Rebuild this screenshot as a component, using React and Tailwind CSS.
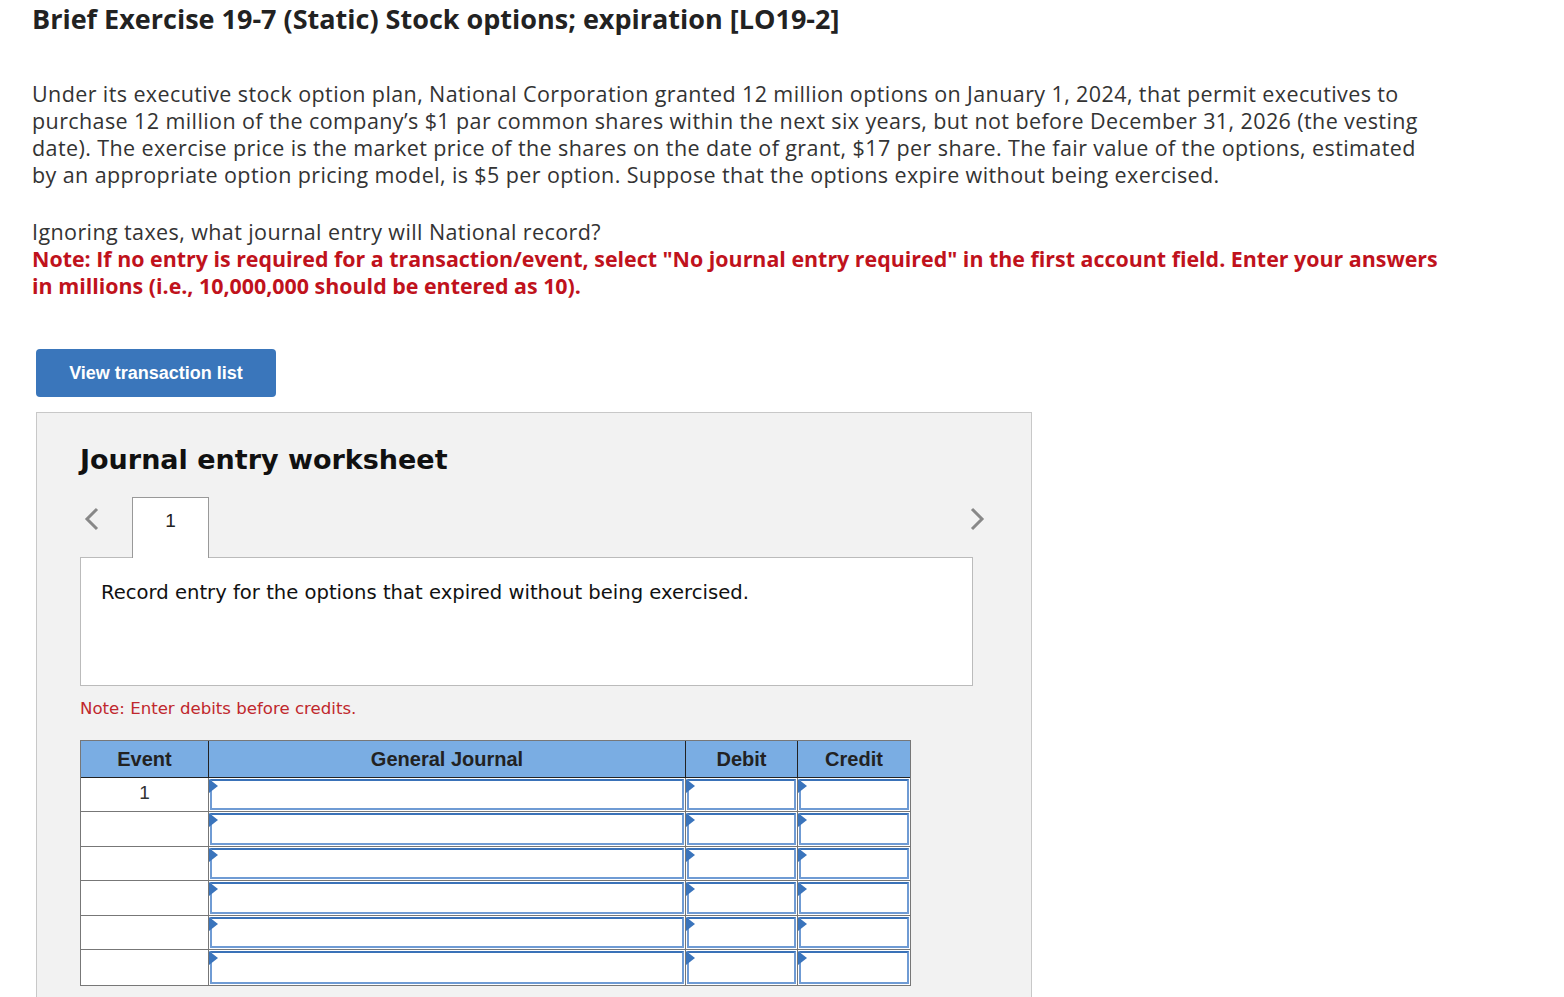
import { useState } from "react";

const rows = [1, 2, 3, 4, 5, 6];

function Flag() {
	return (
		<svg
			className="absolute left-[0px] top-[1px] h-[14px] w-[9px]"
			viewBox="0 0 9 14"
		>
			<path d="M0 0 L9 7 L0 14 Z" fill="#3a74bc" />
		</svg>
	);
}

function Field() {
	return (
		<div className="relative h-full w-full p-[1px]">
			<div className="h-full w-full border-2 border-[#6f9bd4] border-t-[#3a72b8] bg-white" />
			<Flag />
		</div>
	);
}

function JournalTable() {
	return (
		<div className="mt-[18px] w-[831px] border border-[#777] bg-white font-['Liberation_Sans',Arial,sans-serif]">
			<div className="flex h-[37px] border-b border-[#222] bg-[#7aade3] text-[20px] font-bold text-[#222]">
				<div className="flex w-[128px] items-center justify-center border-r border-[#222]">
					Event
				</div>
				<div className="flex w-[477px] items-center justify-center border-r border-[#222]">
					General Journal
				</div>
				<div className="flex w-[112px] items-center justify-center border-r border-[#222]">
					Debit
				</div>
				<div className="flex flex-1 items-center justify-center">Credit</div>
			</div>
			{rows.map((r, i) => (
				<div
					key={r}
					className={`flex h-[34.5px] ${i < rows.length - 1 ? "border-b border-[#777]" : ""}`}
				>
					<div className="flex w-[128px] items-center justify-center border-r border-[#777] pb-[3px] text-[19px] text-[#333]">
						{i === 0 ? "1" : ""}
					</div>
					<div className="w-[477px] border-r border-[#777]">
						<Field />
					</div>
					<div className="w-[112px] border-r border-[#777]">
						<Field />
					</div>
					<div className="flex-1">
						<Field />
					</div>
				</div>
			))}
		</div>
	);
}

function Chevron({ dir }) {
	return (
		<svg className="h-[26px] w-[16px]" viewBox="0 0 16 26" fill="none">
			<path
				d={dir === "left" ? "M13 3 L3 13 L13 23" : "M3 3 L13 13 L3 23"}
				stroke="#888"
				strokeWidth="3"
			/>
		</svg>
	);
}

export default function App() {
	const [tab] = useState(1);

	return (
		<div className="min-h-screen bg-white pl-[32px] pt-[2px] font-['Open_Sans','Lato',sans-serif] text-[#333]">
			<h1 className="text-[27px] font-bold leading-[34px] text-[#222]">
				Brief Exercise 19-7 (Static) Stock options; expiration [LO19-2]
			</h1>
			<p className="mt-[44px] text-[21.5px] leading-[27px] tracking-[0.4px]">
				Under its executive stock option plan, National Corporation granted 12
				million options on January 1, 2024, that permit executives to
				<br />
				purchase 12 million of the company’s $1 par common shares within the
				next six years, but not before December 31, 2026 (the vesting
				<br />
				date). The exercise price is the market price of the shares on the date
				of grant, $17 per share. The fair value of the options, estimated
				<br />
				by an appropriate option pricing model, is $5 per option. Suppose that
				the options expire without being exercised.
			</p>
			<p className="mt-[30px] text-[21.5px] leading-[27px] tracking-[0.4px]">
				Ignoring taxes, what journal entry will National record?
			</p>
			<p className="text-[21.4px] font-bold leading-[27px] text-[#c0121c]">
				Note: If no entry is required for a transaction/event, select "No
				journal entry required" in the first account field. Enter your answers
				<br />
				in millions (i.e., 10,000,000 should be entered as 10).
			</p>

			<button className="ml-[4px] mt-[50px] flex h-[48px] w-[240px] items-center justify-center rounded-[4px] bg-[#3a76bb] font-['Liberation_Sans',Arial,sans-serif] text-[18px] font-bold text-white">
				View transaction list
			</button>

			<div className="ml-[4px] mt-[15px] w-[996px] border border-[#c8c8c8] bg-[#f2f2f2] pb-[40px] pl-[43px] pt-[31px] font-['DejaVu_Sans',Verdana,sans-serif]">
				<h2 className="text-[27px] font-bold leading-[32px] text-[#111]">
					Journal entry worksheet
				</h2>
				<div className="mt-[21px] flex h-[60px] items-end">
					<div className="flex h-full w-[52px] items-start pl-[4px] pt-[9px]">
						<Chevron dir="left" />
					</div>
					<div className="relative z-10 mb-[-1px] flex h-[61px] w-[77px] items-start justify-center border border-b-0 border-[#999] bg-white pt-[9px] font-['Liberation_Sans',Arial,sans-serif] text-[19px] text-[#222]">
						{tab}
					</div>
					<div className="flex h-full flex-1 items-start justify-end pr-[46px] pt-[9px]">
						<Chevron dir="right" />
					</div>
				</div>
				<div className="h-[129px] w-[893px] border border-[#bbb] bg-white pl-[20px] pt-[20px] text-[19.6px] text-[#111]">
					Record entry for the options that expired without being exercised.
				</div>
				<p className="mt-[11px] text-[16.6px] text-[#c0282d]">
					Note: Enter debits before credits.
				</p>
				<JournalTable />
			</div>
		</div>
	);
}
